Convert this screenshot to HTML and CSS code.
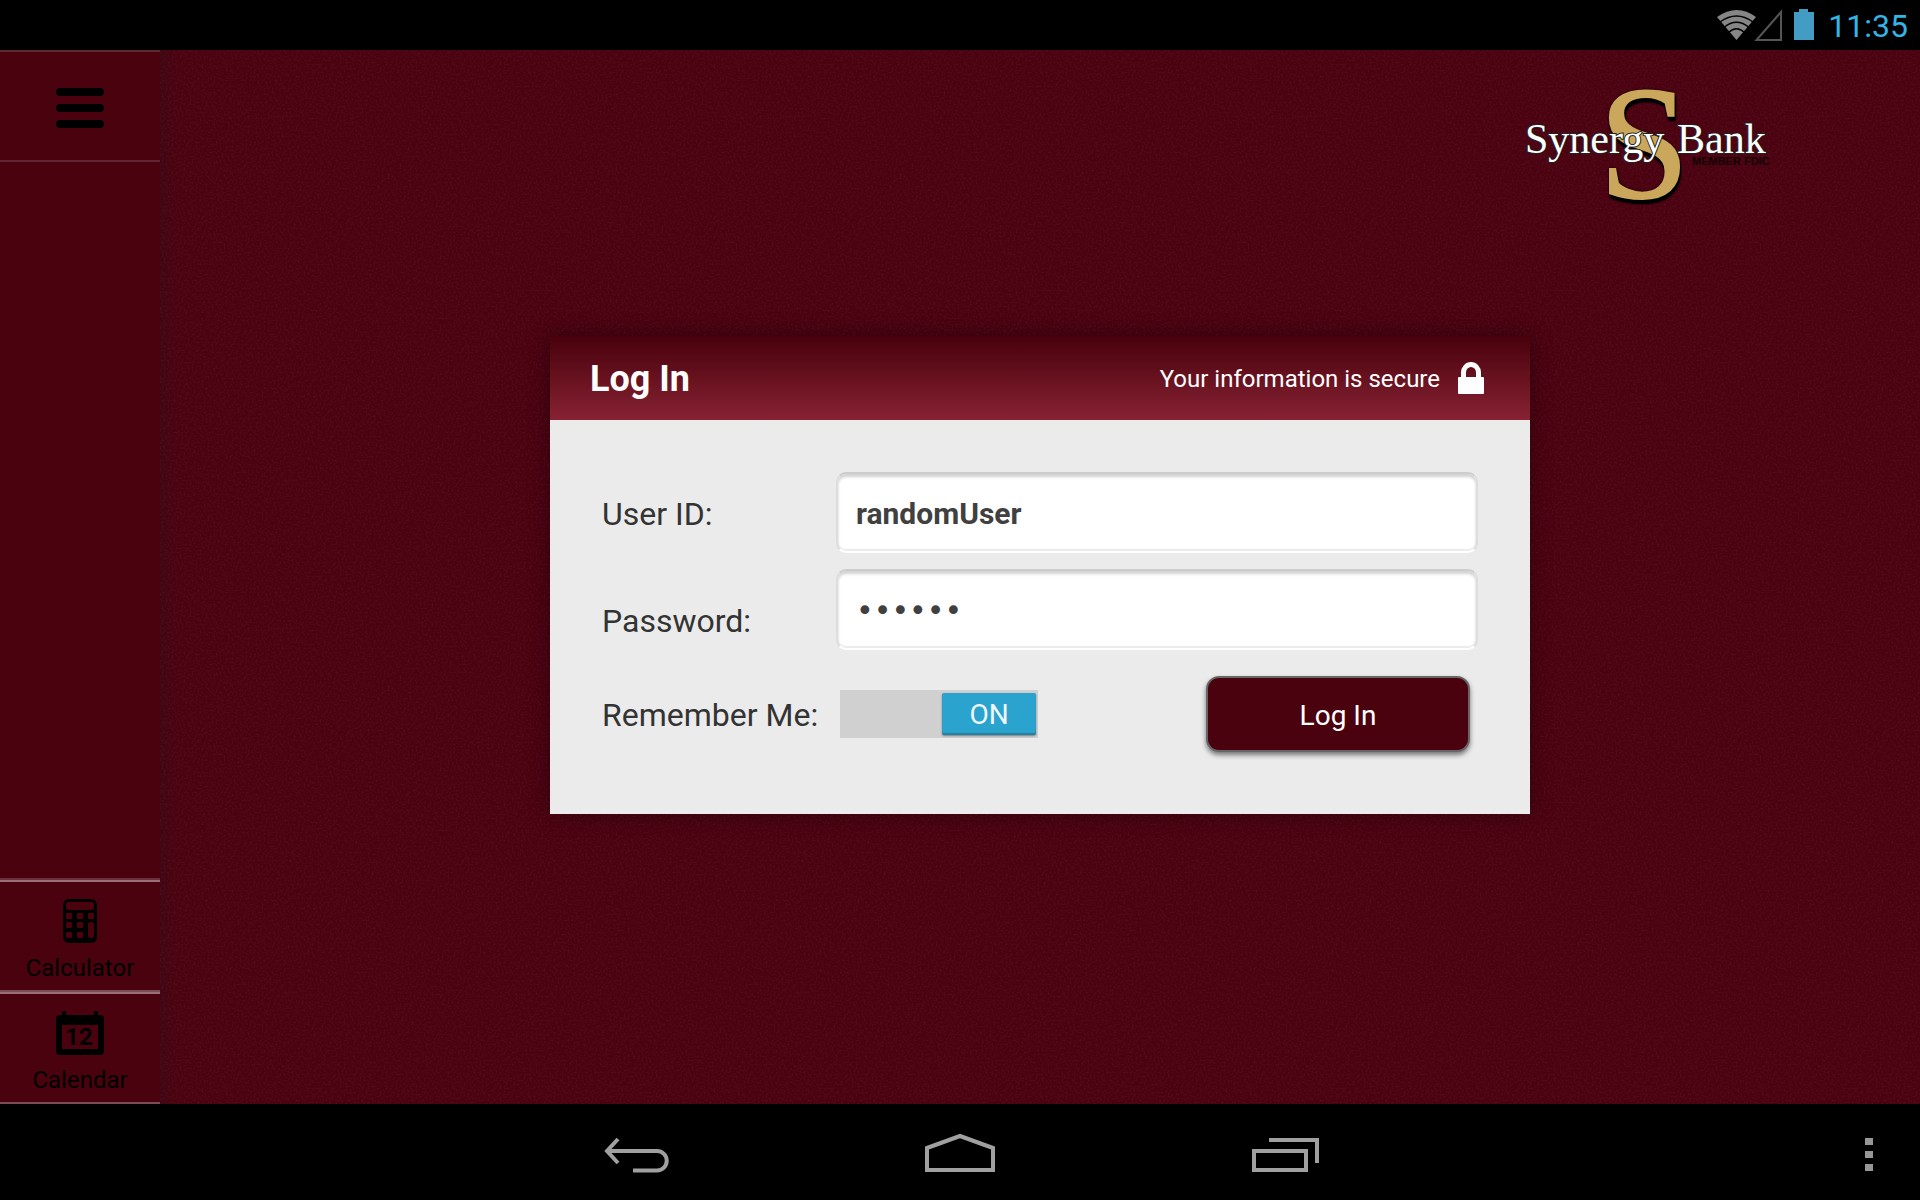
FILE: index.html
```html
<!DOCTYPE html>
<html lang="en">
<head>
    <meta charset="UTF-8">
    <meta name="viewport" content="width=device-width, initial-scale=1.0">
    <title>Synergy Bank - Log In</title>
    <link rel="stylesheet" href="styles.css">
</head>
<body>
    <header class="status-bar">
        <svg class="status-icons" width="98" height="32" viewBox="0 0 98 32" aria-hidden="true">
            <!-- wifi -->
            <path d="M0 8Q20 -6 39 8L19.500 31Z" fill="#868686"/>
            <path d="M3 13Q19.500 1 36 13M7 18.500Q19.500 8 32 18.500M11.500 23.500Q19.500 16 27.500 23.500" fill="none" stroke="#000" stroke-width="1.500"/>
            <!-- signal -->
            <path d="M64 3V31H39.500Z" fill="none" stroke="#555" stroke-width="2"/>
            <!-- battery -->
            <path d="M77 3h5V0h9v3h6v28H77z" fill="#429cc4"/>
        </svg>
        <span class="clock">11:35</span>
    </header>

    <div class="app">
        <nav class="sidebar">
            <button type="button" class="side-item side-menu" aria-label="Menu">
                <svg width="48" height="40" viewBox="0 0 48 40">
                    <rect width="48" height="8" rx="4"/>
                    <rect y="16" width="48" height="8" rx="4"/>
                    <rect y="32" width="48" height="8" rx="4"/>
                </svg>
            </button>
            <div class="side-space"></div>
            <a href="#" class="side-item">
                <svg width="34" height="44" viewBox="0 0 34 44">
                    <rect width="34" height="44" rx="6"/>
                    <g fill="#49020e">
                        <rect x="3" y="3" width="28" height="8" rx="2"/>
                        <rect x="3" y="14" width="6" height="6" rx="1"/>
                        <rect x="14" y="14" width="6" height="6" rx="1"/>
                        <rect x="25" y="14" width="6" height="6" rx="1"/>
                        <rect x="3" y="23" width="6" height="6" rx="1"/>
                        <rect x="14" y="23" width="6" height="6" rx="1"/>
                        <rect x="3" y="33" width="6" height="6" rx="1"/>
                        <rect x="14" y="33" width="6" height="6" rx="1"/>
                        <rect x="25" y="23" width="6" height="16" rx="2"/>
                    </g>
                </svg>
                <span>Calculator</span>
            </a>
            <a href="#" class="side-item">
                <svg width="48" height="44" viewBox="0 0 48 44">
                    <path d="M6 0h4v4h28V0h4v4h2q4 0 4 4v32q0 4-4 4H4q-4 0-4-4V8q0-4 4-4h2zM6 14v24h36V14z" fill-rule="evenodd"/>
                    <text x="23" y="34" class="icon-date">12</text>
                </svg>
                <span>Calendar</span>
            </a>
        </nav>

        <main class="content">
            <svg class="grain" aria-hidden="true">
                <filter id="grain">
                    <feTurbulence type="fractalNoise" baseFrequency="0.5" numOctaves="2" seed="4"/>
                    <feColorMatrix values="0 0 0 0 0.4  0 0 0 0 0.08  0 0 0 0 0.25  1 1 0 0 -0.85"/>
                </filter>
                <rect width="100%" height="100%" filter="url(#grain)"/>
            </svg>

            <svg class="logo" width="250" height="116" viewBox="0 0 250 116" role="img" aria-label="Synergy Bank, Member FDIC">
                <text x="74" y="108" class="logo-s">S</text>
                <text x="0" y="64" class="logo-name">Synergy</text>
                <text x="152" y="64" class="logo-name">Bank</text>
                <text x="167" y="76" class="logo-member">MEMBER FDIC</text>
            </svg>

            <section class="login-card">
                <div class="login-header">
                    <h1>Log In</h1>
                    <p>Your information is secure</p>
                    <svg width="26" height="32" viewBox="0 0 26 32" aria-hidden="true">
                        <path d="M5.500 17V10.500a7.500 8 0 0 1 15 0V17" fill="none" stroke="#fff" stroke-width="5"/>
                        <rect y="15" width="26" height="17" rx="1" fill="#fff"/>
                    </svg>
                </div>
                <form class="login-form">
                    <div class="field">
                        <label for="user-id">User ID:</label>
                        <input type="text" id="user-id" class="text-box" value="randomUser">
                    </div>
                    <div class="field field-password">
                        <label for="password">Password:</label>
                        <input type="password" id="password" class="text-box" value="secret">
                    </div>
                    <div class="field field-actions">
                        <label for="remember">Remember Me:</label>
                        <div class="switch">
                            <input type="checkbox" id="remember" checked>
                            <span class="thumb">ON</span>
                        </div>
                        <button type="submit" class="login-button">Log In</button>
                    </div>
                </form>
            </section>
        </main>
    </div>

    <footer class="nav-bar">
        <div class="nav-main">
            <button type="button" aria-label="Back">
                <svg width="70" height="42" viewBox="0 0 70 42">
                    <path d="M5 20H56a9.500 9.500 0 0 1 0 19.500H32M17 8L6 20L17 32" fill="none" stroke="#a0a0a0" stroke-width="4"/>
                </svg>
            </button>
            <button type="button" aria-label="Home">
                <svg width="70" height="42" viewBox="0 0 70 42">
                    <path d="M2 17L35 5L68 17V39H2Z" fill="none" stroke="#a0a0a0" stroke-width="4"/>
                </svg>
            </button>
            <button type="button" aria-label="Recent apps">
                <svg width="70" height="42" viewBox="0 0 70 42">
                    <path d="M5 20H57V39H5ZM20 9H68V32" fill="none" stroke="#a0a0a0" stroke-width="4"/>
                </svg>
            </button>
        </div>
        <button type="button" class="nav-more" aria-label="More">
            <svg width="8" height="42" viewBox="0 0 8 42" fill="#979797">
                <rect y="7" width="8" height="7"/>
                <rect y="20" width="8" height="7"/>
                <rect y="33" width="8" height="7"/>
            </svg>
        </button>
    </footer>
</body>
</html>
```
FILE: styles.css
```css
* {
    box-sizing: border-box;
}

body {
    font-family: Roboto, sans-serif;
    margin: 0;
    min-height: 100vh;
    display: flex;
    flex-direction: column;
    background: #000;
}

button {
    font-family: inherit;
    border: none;
    background: none;
    padding: 0;
    cursor: pointer;
}

svg {
    display: block;
    overflow: visible;
}

/* Status bar */
.status-bar {
    height: 50px;
    display: flex;
    justify-content: flex-end;
    align-items: center;
    gap: 13px;
    padding-right: 12px;
    background: #000;
}

.clock {
    font-size: 32px;
    line-height: 40px;
    padding-top: 2px;
    color: #33b5e5;
}

.app {
    flex: 1;
    display: flex;
}

/* Sidebar */
.sidebar {
    width: 160px;
    display: flex;
    flex-direction: column;
    background: #49020e;
}

.side-item {
    height: 112px;
    display: flex;
    flex-direction: column;
    justify-content: center;
    align-items: center;
    gap: 11px;
    border-top: 2px solid #602733;
    border-bottom: 2px solid #602733;
    color: #000;
    font-size: 24px;
    line-height: 28px;
    text-decoration: none;
}

.side-menu {
    padding-top: 4px;
}

a.side-item {
    justify-content: flex-end;
    padding-bottom: 8px;
    border-top-color: #9b6e78;
    border-bottom-color: #7b4c56;
}

.side-space {
    flex: 1;
    border-bottom: 2px solid #6b303c;
}

.icon-date {
    font-size: 24px;
    font-weight: bold;
    text-anchor: middle;
}

/* Content */
.content {
    flex: 1;
    position: relative;
    display: flex;
    flex-direction: column;
    padding-top: 39px;
    background: linear-gradient(to right, #3d0712, #4a020f 14px);
}

.grain {
    position: absolute;
    top: 0;
    left: 0;
    width: 100%;
    height: 100%;
    opacity: 0.2;
    overflow: hidden;
}

.logo {
    position: relative;
    align-self: flex-end;
    margin-right: 145px;
}

.logo-s {
    font-family: "Liberation Serif", serif;
    font-size: 162px;
    fill: #cba75b;
    stroke: #cba75b;
    stroke-width: 2px;
    filter: drop-shadow(0 0 1px #000) drop-shadow(1px 4px 0 #000);
}

.logo-name {
    font-family: "Liberation Serif", serif;
    font-size: 42px;
    fill: #fff;
    stroke: #222;
    stroke-width: 2px;
    paint-order: stroke;
}

.logo-member {
    font-family: "Liberation Sans", sans-serif;
    font-size: 11px;
    font-weight: bold;
    fill: #120004;
}

.login-card {
    position: relative;
    width: 980px;
    max-width: 100%;
    margin: 131px auto 0;
    background: #ebebeb;
    box-shadow: 0 0 20px rgba(0, 0, 0, 0.4);
}

.login-header {
    height: 84px;
    display: flex;
    align-items: center;
    padding: 0 46px 0 40px;
    background: linear-gradient(#48010c, #872233);
    color: #fff;
}

.login-header h1 {
    flex: 1;
    margin: 0;
    padding-top: 2px;
    font-size: 36px;
}

.login-header p {
    margin: 0 18px 0 0;
    padding-top: 2px;
    font-size: 24px;
}

/* Form */
.login-form {
    padding: 52px 52px 62px;
}

.field {
    display: flex;
    align-items: center;
    margin-bottom: 16px;
}

.field label {
    width: 234px;
    padding-top: 2px;
    font-size: 32px;
    line-height: 40px;
    color: #333;
}

.field-password {
    align-items: flex-start;
    margin-bottom: 26px;
}

.field-password label {
    padding-top: 32px;
}

.field-actions {
    margin-bottom: 0;
    padding-right: 8px;
}

.field-actions label {
    width: 238px;
}

.text-box {
    flex: 1;
    height: 81px;
    padding: 2px 18px 0;
    border: 2px solid #ddd;
    border-top-color: #ccc;
    border-bottom-color: #fff;
    border-radius: 10px;
    background: #fff;
    box-shadow: inset 0 3px 3px rgba(0, 0, 0, 0.18), inset 0 -2px 1px rgba(0, 0, 0, 0.08);
    font-family: inherit;
    font-size: 30px;
    font-weight: bold;
    color: #404040;
    outline: none;
}

.text-box[type="password"] {
    font-family: "DejaVu Sans", sans-serif;
    font-weight: normal;
}

.switch {
    position: relative;
    width: 198px;
    height: 48px;
    display: flex;
    justify-content: flex-end;
    padding: 3px 2px;
    background: #d0d0d0;
}

.switch input {
    position: absolute;
    top: 0;
    left: 0;
    width: 100%;
    height: 100%;
    margin: 0;
    opacity: 0;
    cursor: pointer;
}

.thumb {
    width: 94px;
    border-radius: 2px;
    background: #2aa3ce;
    box-shadow: inset 0 -2px 1px rgba(0, 0, 0, 0.2), 0 1px 2px rgba(0, 0, 0, 0.4);
    color: #f0f6f8;
    font-size: 28px;
    line-height: 44px;
    text-align: center;
}

.login-button {
    width: 264px;
    height: 76px;
    margin-left: auto;
    padding-top: 2px;
    border: 2px solid #666;
    border-radius: 13px;
    background: #49020e;
    box-shadow: 0 3px 5px rgba(0, 0, 0, 0.5);
    color: #fff;
    font-size: 28px;
}

/* Bottom navigation */
.nav-bar {
    height: 96px;
    display: grid;
    grid-template-columns: 1fr auto 1fr;
    align-items: center;
    background: #000;
}

.nav-main {
    grid-column: 2;
    display: flex;
    gap: 254px;
}

.nav-more {
    justify-self: end;
    margin-right: 47px;
}
```
